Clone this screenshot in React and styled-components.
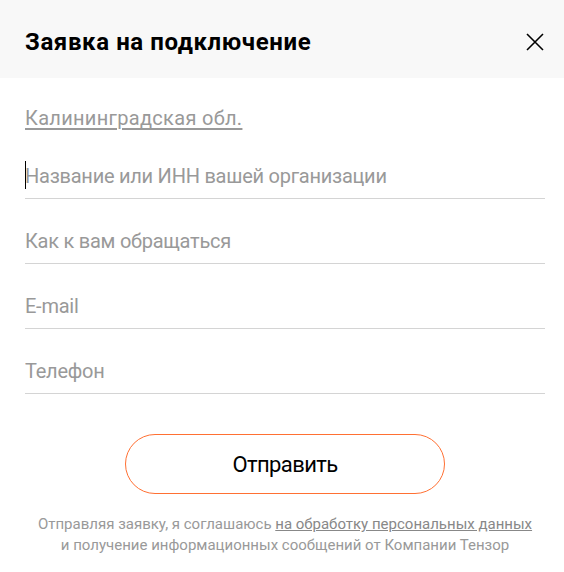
import React from "react";
import styled, { createGlobalStyle } from "styled-components";

const Global = createGlobalStyle`
  html, body { margin: 0; padding: 0; background: #fff; }
  body { font-family: "Roboto", "Noto Sans", sans-serif; }
  * { box-sizing: border-box; }
`;

const Dialog = styled.div`
  width: 564px;
  height: 572px;
  background: #fff;
  display: flex;
  flex-direction: column;
`;

const Header = styled.div`
  height: 78px;
  background: #f8f8f8;
  display: flex;
  align-items: center;
  justify-content: space-between;
  padding: 6px 20px 0 25px;
`;

const Title = styled.h1`
  margin: 0;
  font-size: 24px;
  font-weight: 700;
  color: #000;
  letter-spacing: 0.6px;
`;

const Close = styled.button`
  width: 18px;
  height: 18px;
  padding: 0;
  border: 0;
  background: none;
  display: flex;
  cursor: pointer;
`;

const Body = styled.div`
  padding: 28px 19px 0 25px;
  display: flex;
  flex-direction: column;
`;

const Region = styled.a`
  align-self: flex-start;
  font-size: 20px;
  line-height: 24px;
  color: #999;
  letter-spacing: 0.3px;
  text-decoration: underline;
  text-underline-offset: 3px;
  margin-bottom: 4px;
`;

const Field = styled.div`
  position: relative;
  height: 45px;
  margin-top: 20px;
  border-bottom: 1px solid #d4d4d4;
  display: flex;
  align-items: flex-start;
  &::before {
    content: "";
    display: ${(p) => (p.$caret ? "block" : "none")};
    position: absolute;
    left: 0;
    top: 7px;
    width: 1px;
    height: 28px;
    background: #000;
  }
`;

const Input = styled.input`
  width: 100%;
  border: 0;
  outline: none;
  padding: 0;
  margin-top: 6px;
  height: 32px;
  font-family: inherit;
  font-size: 20px;
  letter-spacing: -0.25px;
  color: #333;
  background: transparent;
  caret-color: transparent;
  &::placeholder { color: #999; }
`;

const Submit = styled.button`
  align-self: center;
  margin-top: 40px;
  width: 320px;
  height: 60px;
  border: 1px solid #ff7033;
  border-radius: 30px;
  background: #fff;
  font-family: inherit;
  font-size: 22px;
  letter-spacing: -0.6px;
  color: #000;
  cursor: pointer;
`;

const Note = styled.p`
  margin: 20px 0 0;
  text-align: center;
  font-size: 15px;
  line-height: 21px;
  color: #999;
`;

const NoteLink = styled.a`
  color: #888;
  text-decoration: underline;
`;

const fields = [
  "Название или ИНН вашей организации",
  "Как к вам обращаться",
  "E-mail",
  "Телефон",
];

export default function App() {
  return (
    <>
      <Global />
      <Dialog>
        <Header>
          <Title>Заявка на подключение</Title>
          <Close aria-label="Закрыть">
            <svg width="18" height="18" viewBox="0 0 18 18">
              <path d="M1 1 L17 17 M17 1 L1 17" stroke="#000" strokeWidth="1.6" fill="none" />
            </svg>
          </Close>
        </Header>
        <Body>
          <Region href="#">Калининградская обл.</Region>
          {fields.map((f, i) => (
            <Field key={f} $caret={i === 0}>
              <Input placeholder={f} />
            </Field>
          ))}
          <Submit>Отправить</Submit>
          <Note>
            Отправляя заявку, я соглашаюсь <NoteLink href="#">на обработку персональных данных</NoteLink>
            <br />и получение информационных сообщений от Компании Тензор
          </Note>
        </Body>
      </Dialog>
    </>
  );
}
